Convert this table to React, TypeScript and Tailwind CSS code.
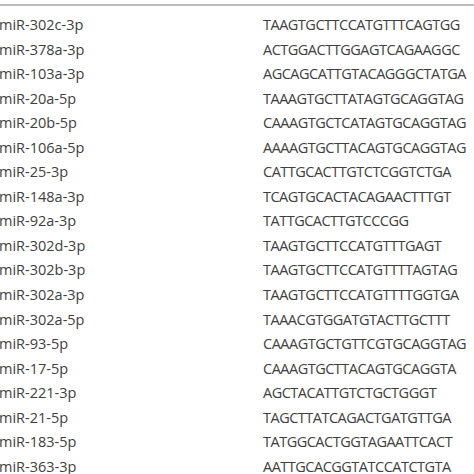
const rows: [string, string][] = [
  ["miR-302c-3p", "TAAGTGCTTCCATGTTTCAGTGG"],
  ["miR-378a-3p", "ACTGGACTTGGAGTCAGAAGGC"],
  ["miR-103a-3p", "AGCAGCATTGTACAGGGCTATGA"],
  ["miR-20a-5p", "TAAAGTGCTTATAGTGCAGGTAG"],
  ["miR-20b-5p", "CAAAGTGCTCATAGTGCAGGTAG"],
  ["miR-106a-5p", "AAAAGTGCTTACAGTGCAGGTAG"],
  ["miR-25-3p", "CATTGCACTTGTCTCGGTCTGA"],
  ["miR-148a-3p", "TCAGTGCACTACAGAACTTTGT"],
  ["miR-92a-3p", "TATTGCACTTGTCCCGG"],
  ["miR-302d-3p", "TAAGTGCTTCCATGTTTGAGT"],
  ["miR-302b-3p", "TAAGTGCTTCCATGTTTTAGTAG"],
  ["miR-302a-3p", "TAAGTGCTTCCATGTTTTGGTGA"],
  ["miR-302a-5p", "TAAACGTGGATGTACTTGCTTT"],
  ["miR-93-5p", "CAAAGTGCTGTTCGTGCAGGTAG"],
  ["miR-17-5p", "CAAAGTGCTTACAGTGCAGGTA"],
  ["miR-221-3p", "AGCTACATTGTCTGCTGGGT"],
  ["miR-21-5p", "TAGCTTATCAGACTGATGTTGA"],
  ["miR-183-5p", "TATGGCACTGGTAGAATTCACT"],
  ["miR-363-3p", "AATTGCACGGTATCCATCTGTA"],
];

export default function App() {
  return (
    <div
      className="w-[474px] h-[474px] bg-white overflow-hidden text-[#404040]"
      style={{ fontFamily: '"Open Sans", "Noto Sans", sans-serif' }}
    >
      <div className="mt-[4px] h-[2px] bg-[#bcbcbc]" />
      <div className="mt-[7px] flex flex-col">
        {rows.map(([name, seq]) => (
          <div key={name} className="h-[24.55px] flex items-center text-[14.5px] leading-none">
            <span className="w-[264px] ml-[-1px]">{name}</span>
            <span className="tracking-[-0.5px]">{seq}</span>
          </div>
        ))}
      </div>
    </div>
  );
}
